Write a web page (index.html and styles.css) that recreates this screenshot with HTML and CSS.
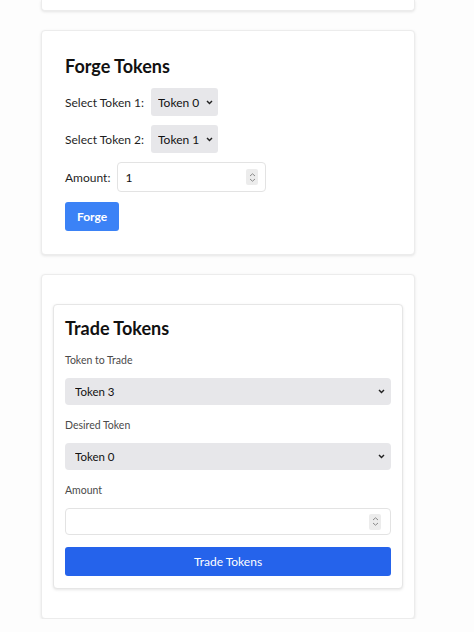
FILE: index.html
```html
<!DOCTYPE html>
<html>
<head>
<meta charset="utf-8">
<link rel="stylesheet" href="styles.css">
</head>
<body>
<main class="page">
  <section class="card card-top"></section>

  <section class="card forge">
    <h2 class="title">Forge Tokens</h2>
    <div class="row">
      <label class="row-label">Select Token 1:</label>
      <select class="select-sm"><option>Token 0</option></select>
    </div>
    <div class="row">
      <label class="row-label">Select Token 2:</label>
      <select class="select-sm"><option>Token 1</option></select>
    </div>
    <div class="row">
      <label class="row-label">Amount:</label>
      <div class="num num-sm">
        <span class="num-value">1</span>
        <span class="spin"><svg width="9" height="11" viewBox="0 0 9 11"><path d="M2 4 L4.5 1.8 L7 4 M2 7 L4.5 9.2 L7 7" fill="none" stroke="#8a8a8a" stroke-width="1"/></svg></span>
      </div>
    </div>
    <button class="btn-forge">Forge</button>
  </section>

  <section class="card trade-outer">
    <div class="card trade">
      <h2 class="title">Trade Tokens</h2>
      <div class="field">
        <label class="field-label">Token to Trade</label>
        <select class="select-lg"><option>Token 3</option></select>
      </div>
      <div class="field">
        <label class="field-label">Desired Token</label>
        <select class="select-lg"><option>Token 0</option></select>
      </div>
      <div class="field">
        <label class="field-label">Amount</label>
        <div class="num num-lg">
          <span class="num-value"></span>
          <span class="spin"><svg width="9" height="11" viewBox="0 0 9 11"><path d="M2 4 L4.5 1.8 L7 4 M2 7 L4.5 9.2 L7 7" fill="none" stroke="#8a8a8a" stroke-width="1"/></svg></span>
        </div>
      </div>
      <button class="btn-trade">Trade Tokens</button>
    </div>
  </section>
</main>
</body>
</html>
```
FILE: styles.css
```css
* { box-sizing: border-box; }
html, body { margin: 0; padding: 0; background: #fdfdfd; }
body {
  font-family: Lato, "Noto Sans", sans-serif;
  color: #111;
}
.page {
  width: 374px;
  margin-left: 41px;
  display: flex;
  flex-direction: column;
  gap: 19px;
}
.card {
  background: #fff;
  border: 1px solid #ececec;
  border-radius: 4px;
  box-shadow: 0 1px 3px rgba(0,0,0,0.10);
}
.card-top {
  height: 11px;
  border-top: none;
  border-radius: 0 0 4px 4px;
}
.forge {
  display: flex;
  flex-direction: column;
  padding: 23px 23px 23px;
}
.title {
  margin: 0 0 10px;
  font-size: 18px;
  line-height: 24px;
  font-weight: 700;
  color: #111;
}
.row {
  display: flex;
  align-items: center;
  gap: 7px;
  margin-bottom: 9px;
}
.row-label {
  font-size: 12px;
  color: #1f1f1f;
}
select {
  appearance: none;
  -webkit-appearance: none;
  border: none;
  background-color: #e7e7ea;
  background-image: url("data:image/svg+xml;utf8,<svg xmlns='http://www.w3.org/2000/svg' width='7' height='5' viewBox='0 0 7 5'><path d='M1 1 L3.5 3.6 L6 1' fill='none' stroke='%23222' stroke-width='1.4'/></svg>");
  background-repeat: no-repeat;
  font-family: inherit;
  color: #111;
  outline: none;
}
.select-sm {
  height: 28px;
  padding: 0 18px 0 7px;
  font-size: 12px;
  border-radius: 3px;
  background-position: right 5px center;
}
.num {
  display: flex;
  align-items: center;
  justify-content: space-between;
  background: #fff;
  border: 1px solid #e3e3e3;
  border-radius: 4px;
}
.num-sm {
  width: 149px;
  height: 30px;
  padding: 0 7px 0 7px;
  font-size: 12px;
}
.spin {
  display: flex;
  align-items: center;
  justify-content: center;
  width: 12px;
  height: 16px;
  background: #ececec;
  border-radius: 2px;
}
.btn-forge {
  align-self: flex-start;
  margin-top: 1px;
  width: 54px;
  height: 29px;
  border: none;
  border-radius: 3px;
  background: #3b82f6;
  color: #fff;
  font-family: inherit;
  font-weight: 700;
  font-size: 12px;
  padding: 0;
}
.trade-outer {
  padding: 29px 11px 29px;
}
.trade {
  padding: 11px 11px 12px;
  border-color: #e6e6e6;
}
.trade .title { margin-bottom: 12px; }
.field { margin-bottom: 12px; }
.field-label {
  display: block;
  font-size: 10.5px;
  line-height: 16px;
  color: #4a4a4a;
  margin-bottom: 10px;
}
.select-lg {
  display: block;
  width: 100%;
  height: 27px;
  padding: 0 0 0 10px;
  font-size: 11.5px;
  border-radius: 4px;
  background-position: right 6px center;
}
.num-lg {
  width: 100%;
  height: 27px;
  padding: 0 9px 0 10px;
}
.btn-trade {
  display: block;
  width: 100%;
  height: 29px;
  border: none;
  border-radius: 3px;
  background: #2563eb;
  color: #fff;
  font-family: inherit;
  font-size: 12px;
  padding: 0;
}
```
